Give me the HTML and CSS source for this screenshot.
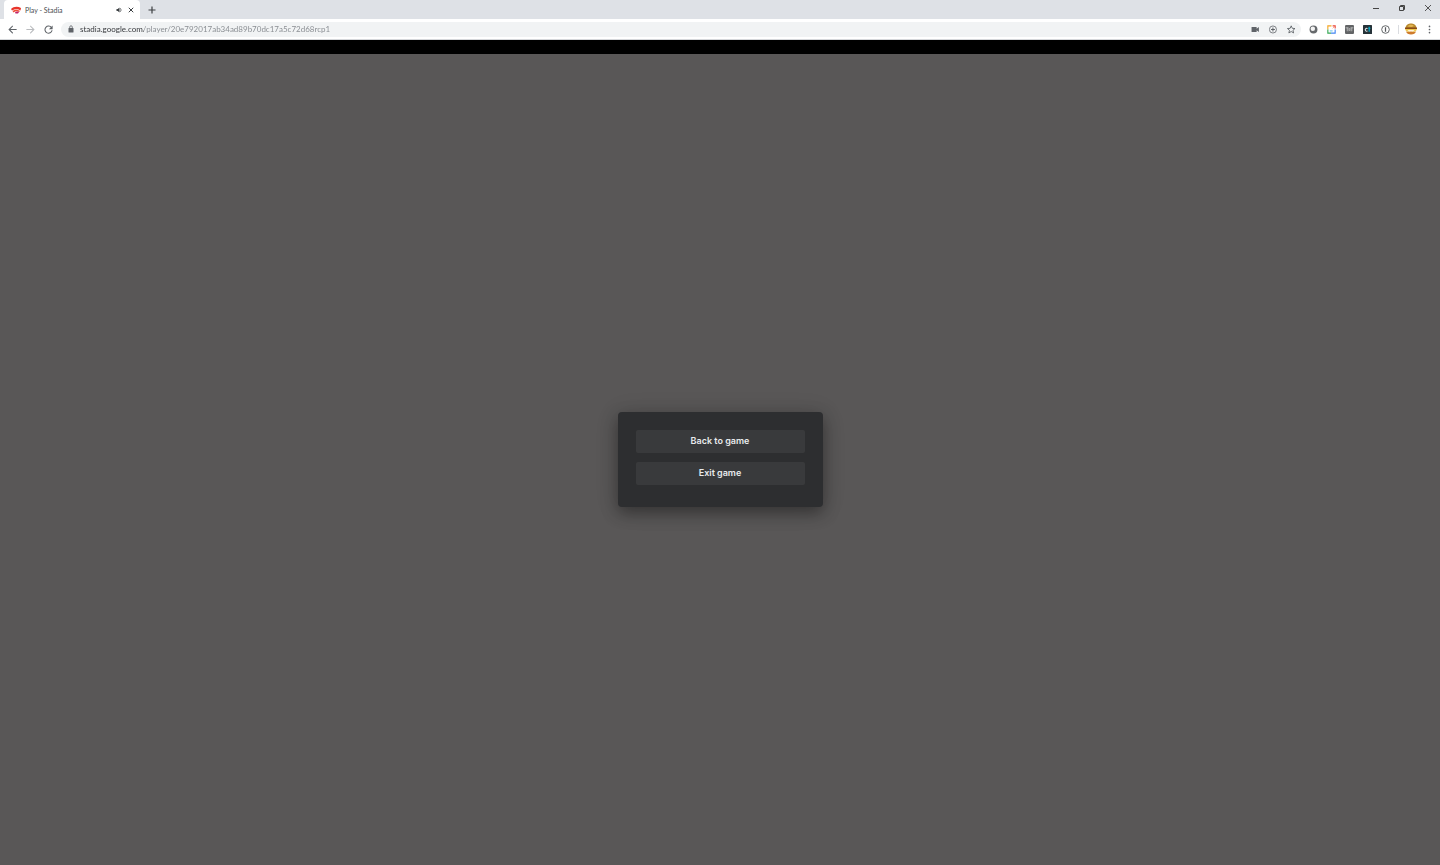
FILE: index.html
```html
<!DOCTYPE html>
<html lang="en">

<head>
    <meta charset="UTF-8">
    <meta name="viewport" content="width=device-width, initial-scale=1">
    <title>Play - Stadia</title>
    <link rel="stylesheet" href="styles.css">
</head>

<body>
    <header class="browser">
        <div class="tabstrip">
            <div class="tab">
                <svg class="favicon" viewBox="0 0 20 16">
                    <path fill="#e8352b" d="M0 6C5 1 13 0 20 4l-1 5C14 5 8 5 2 9z" />
                    <path fill="#f0503a" d="M3 10c5-4 10-4 15 0l-2 2c-3-2-7-2-11 1z" />
                    <path fill="#c0246a" d="M8 13c2-2 6-3 8-1l-2 3H9z" />
                </svg>
                <span class="tab-title">Play - Stadia</span>
                <button class="tab-button" aria-label="Mute tab">
                    <svg viewBox="0 0 24 24">
                        <path fill="currentColor" d="M2 8h5l7-6v20l-7-6H2z" />
                        <path fill="none" stroke="currentColor" stroke-width="3" d="M17 5c4 4 4 10 0 14" />
                    </svg>
                </button>
                <button class="tab-button" aria-label="Close tab">
                    <svg viewBox="0 0 24 24">
                        <path fill="none" stroke="currentColor" stroke-width="4" d="M3 3l18 18M21 3L3 21" />
                    </svg>
                </button>
            </div>
            <button class="new-tab" aria-label="New tab">
                <svg viewBox="0 0 8 8">
                    <path fill="none" stroke="currentColor" stroke-width="1.200" d="M4 .5v7M.5 4h7" />
                </svg>
            </button>
            <div class="window-controls">
                <button aria-label="Minimize">
                    <svg viewBox="0 0 8 8">
                        <path fill="none" stroke="currentColor" d="M1 4.500h6" />
                    </svg>
                </button>
                <button aria-label="Restore">
                    <svg viewBox="0 0 8 8">
                        <path fill="none" stroke="currentColor" d="M1.500 2.500h4v4h-4zM2.500 2V1.500h4v4H6" />
                    </svg>
                </button>
                <button aria-label="Close">
                    <svg viewBox="0 0 8 8">
                        <path fill="none" stroke="currentColor" stroke-width=".9" d="M1 1l6 6M7 1L1 7" />
                    </svg>
                </button>
            </div>
        </div>

        <div class="toolbar">
            <button class="icon-button nav" aria-label="Back">
                <svg viewBox="0 0 24 24">
                    <path fill="currentColor" d="M23 10.500H6.500l7-7L12 1 1 12l11 11 1.500-2.500-7-7H23z" />
                </svg>
            </button>
            <button class="icon-button nav forward" aria-label="Forward">
                <svg viewBox="0 0 24 24">
                    <path fill="currentColor" d="M1 10.500h16.500l-7-7L12 1l11 11-11 11-1.500-2.500 7-7H1z" />
                </svg>
            </button>
            <button class="icon-button nav" aria-label="Reload">
                <svg viewBox="0 0 24 24">
                    <path fill="none" stroke="currentColor" stroke-width="2.800" d="M20 7a9.500 9.500 0 1 0 1.500 7" />
                    <path fill="currentColor" d="M23 1v10H13z" />
                </svg>
            </button>

            <div class="omnibox">
                <svg class="lock" viewBox="0 0 12 16">
                    <rect x="1" y="6" width="10" height="9" rx="1" fill="currentColor" />
                    <path fill="none" stroke="currentColor" stroke-width="1.600" d="M3.500 7V4a2.500 2.500 0 0 1 5 0v3" />
                </svg>
                <input class="url" type="text" aria-label="Address" spellcheck="false"
                    value="stadia.google.com/player/20e792017ab34ad89b70dc17a5c72d68rcp1">
                <button class="icon-button" aria-label="Camera">
                    <svg viewBox="0 0 16 16">
                        <path fill="currentColor" d="M1 3.500h9v3l4-3v9l-4-3v3H1z" />
                    </svg>
                </button>
                <button class="icon-button" aria-label="Install">
                    <svg viewBox="0 0 16 16">
                        <circle cx="7" cy="8" r="6.300" fill="none" stroke="currentColor" stroke-width="1.400" />
                        <path fill="none" stroke="currentColor" stroke-width="1.800" d="M7 4.500v7M3.500 8h7" />
                    </svg>
                </button>
                <button class="icon-button" aria-label="Bookmark">
                    <svg viewBox="0 0 16 16">
                        <path fill="none" stroke="currentColor" stroke-width="1.600" d="M7.500 1.500l1.900 4.400 4.800.4-3.600 3.100 1.100 4.700-4.200-2.500-4.200 2.500 1.100-4.700L.8 6.300l4.800-.4z" />
                    </svg>
                </button>
            </div>

            <button class="icon-button" aria-label="Extension: sphere">
                <svg viewBox="0 0 16 16">
                    <circle cx="8" cy="8" r="7" fill="#66696c" />
                    <circle cx="6.800" cy="6.600" r="4" fill="#f4f4f4" />
                </svg>
            </button>
            <button class="icon-button" aria-label="Extension: screenshot">
                <svg viewBox="0 0 16 16">
                    <g fill="none" stroke-width="2">
                        <path stroke="#f5a623" d="M1.500 8V1.500H8" />
                        <path stroke="#ea4335" d="M10 1.500h4.500V6" />
                        <path stroke="#34a853" d="M1.500 8v6.500H7" />
                        <path stroke="#4285f4" d="M14.500 8v6.500H7" />
                        <path stroke="#f08a70" stroke-width="1.200" d="M10 6l4-4" />
                        <path stroke="#4db6e2" stroke-width="1.500" d="M5 10.500h5" />
                    </g>
                </svg>
            </button>
            <button class="icon-button" aria-label="Extension: mask">
                <svg viewBox="0 0 16 16">
                    <rect width="16" height="16" rx="2" fill="#626466" />
                    <path fill="none" stroke="#c4c5c6" stroke-width="1.400" d="M1 5h5l2 2 2-2h5M4 5v6M12 5v6M6 11l4-4M6 7l4 4" />
                </svg>
            </button>
            <button class="icon-button" aria-label="Extension: ct">
                <svg viewBox="0 0 16 16">
                    <rect width="16" height="16" rx="1" fill="#263238" />
                    <path fill="none" stroke="#e7eef0" stroke-width="1.800" d="M8 6.500a2.500 2.500 0 1 0 0 4" />
                    <path fill="none" stroke="#00a9c7" stroke-width="2.200" d="M11 3v9M9.500 6H13" />
                </svg>
            </button>
            <button class="icon-button" aria-label="Extension: password manager">
                <svg viewBox="0 0 16 16">
                    <circle cx="8" cy="8" r="6.800" fill="none" stroke="#55585b" stroke-width="1.600" />
                    <path stroke="#55585b" stroke-width="2.200" d="M8 4v8" />
                </svg>
            </button>
            <span class="separator"></span>
            <button class="icon-button avatar" aria-label="Profile">
                <svg viewBox="0 0 24 24">
                    <path fill="#b98a2c" d="M1 10C2 3 7 1 12 1s10 2 11 9z" />
                    <path fill="#e3b552" d="M5 7c3-4 9-5 13-1l-5 2z" />
                    <path fill="#8a4a16" d="M0 9h24v3H0z" />
                    <path fill="#efc94f" d="M0 12h24l-2 4-5 2-5-2-5 2-5-2z" />
                    <path fill="#fff4de" d="M5 14h14l-3 3H8z" />
                    <path fill="#cf7b2b" d="M2 17l5 1 5-1 5 1 5-1c-1 4-5 6-10 6S3 21 2 17z" />
                </svg>
            </button>
            <button class="icon-button" aria-label="Menu">
                <svg viewBox="0 0 16 16">
                    <g fill="currentColor">
                        <circle cx="8" cy="2.500" r="1.500" />
                        <circle cx="8" cy="8" r="1.500" />
                        <circle cx="8" cy="13.500" r="1.500" />
                    </g>
                </svg>
            </button>
        </div>
    </header>

    <div class="letterbox"></div>

    <main class="player">
        <div class="dialog" role="dialog" aria-label="Game menu">
            <button class="dialog-button">Back to game</button>
            <button class="dialog-button">Exit game</button>
        </div>
    </main>
</body>

</html>
```

FILE: styles.css
```css
* {
    box-sizing: border-box;
}

body {
    margin: 0;
    min-height: 100vh;
    display: flex;
    flex-direction: column;
    background: #595757;
    font-family: Lato, "Noto Sans", sans-serif;
    font-size: 8px;
}

button {
    display: flex;
    align-items: center;
    justify-content: center;
    margin: 0;
    padding: 0;
    border: none;
    background: none;
    color: inherit;
    font-family: inherit;
    cursor: pointer;
}

svg {
    display: block;
    flex: none;
}

/* Tab strip */
.tabstrip {
    display: flex;
    height: 19px;
    padding-left: 4px;
    background: #dee1e6;
    color: #3c4043;
}

.tab {
    display: flex;
    align-items: center;
    width: 136px;
    padding: 0 3px 0 7px;
    border-radius: 4px 4px 0 0;
    background: #fff;
}

.favicon {
    width: 10px;
    height: 8px;
}

.tab-title {
    flex: 1;
    margin-left: 4px;
    font-size: 7px;
    line-height: 10px;
    color: #4a4d51;
}

.tab-button {
    width: 12px;
    height: 12px;
}

.tab-button svg {
    width: 6px;
    height: 6px;
}

.new-tab {
    width: 24px;
}

.new-tab svg,
.window-controls svg {
    width: 8px;
    height: 8px;
}

.window-controls {
    display: flex;
    height: 16px;
    margin-left: auto;
    color: #444;
}

.window-controls button {
    width: 26px;
}

.window-controls button:last-child {
    width: 25px;
}

/* Toolbar */
.toolbar {
    display: flex;
    align-items: center;
    height: 21px;
    padding: 0 2px 0 3px;
    border-bottom: 1px solid #d5d7da;
    background: #fff;
    color: #5f6368;
}

.icon-button {
    flex: none;
    width: 18px;
    height: 18px;
}

.icon-button svg {
    width: 9px;
    height: 9px;
}

.forward {
    color: #b9bbbe;
}

.omnibox {
    display: flex;
    flex: 1;
    align-items: center;
    height: 15px;
    margin: 0 3px 0 4px;
    padding: 0 1px 0 7px;
    border-radius: 8px;
    background: #f1f3f4;
}

.omnibox .lock {
    width: 6px;
    height: 8px;
}

/* the host is darker than the path */
.url {
    flex: 1;
    min-width: 0;
    height: 13px;
    margin-left: 6px;
    padding: 0;
    border: none;
    outline: none;
    background: linear-gradient(90deg, #303236 64px, #85898e 64px);
    -webkit-background-clip: text;
    background-clip: text;
    -webkit-text-fill-color: transparent;
    color: #303236;
    font-family: inherit;
    font-size: 8px;
}

.separator {
    width: 1px;
    height: 9px;
    margin: 0 3px 0 4px;
    background: #dadce0;
}

.avatar svg {
    width: 12px;
    height: 12px;
}

/* Player */
.letterbox {
    height: 14px;
    background: #000;
}

.player {
    display: flex;
    flex: 1;
    align-items: center;
    justify-content: center;
}

.dialog {
    display: flex;
    flex-direction: column;
    gap: 9px;
    width: 205px;
    padding: 18px 18px 22px;
    border-radius: 4px;
    background: #2d2e30;
    box-shadow: 0 6px 16px rgba(0, 0, 0, 0.35), 0 2px 24px rgba(0, 0, 0, 0.12);
}

.dialog-button {
    height: 23px;
    padding-bottom: 1px;
    border-radius: 2px;
    background: #393a3c;
    color: #e8eaed;
    font-family: Inter, sans-serif;
    font-size: 9px;
    font-weight: 600;
    line-height: 12px;
}

.dialog-button:hover {
    background: #444547;
}
```
